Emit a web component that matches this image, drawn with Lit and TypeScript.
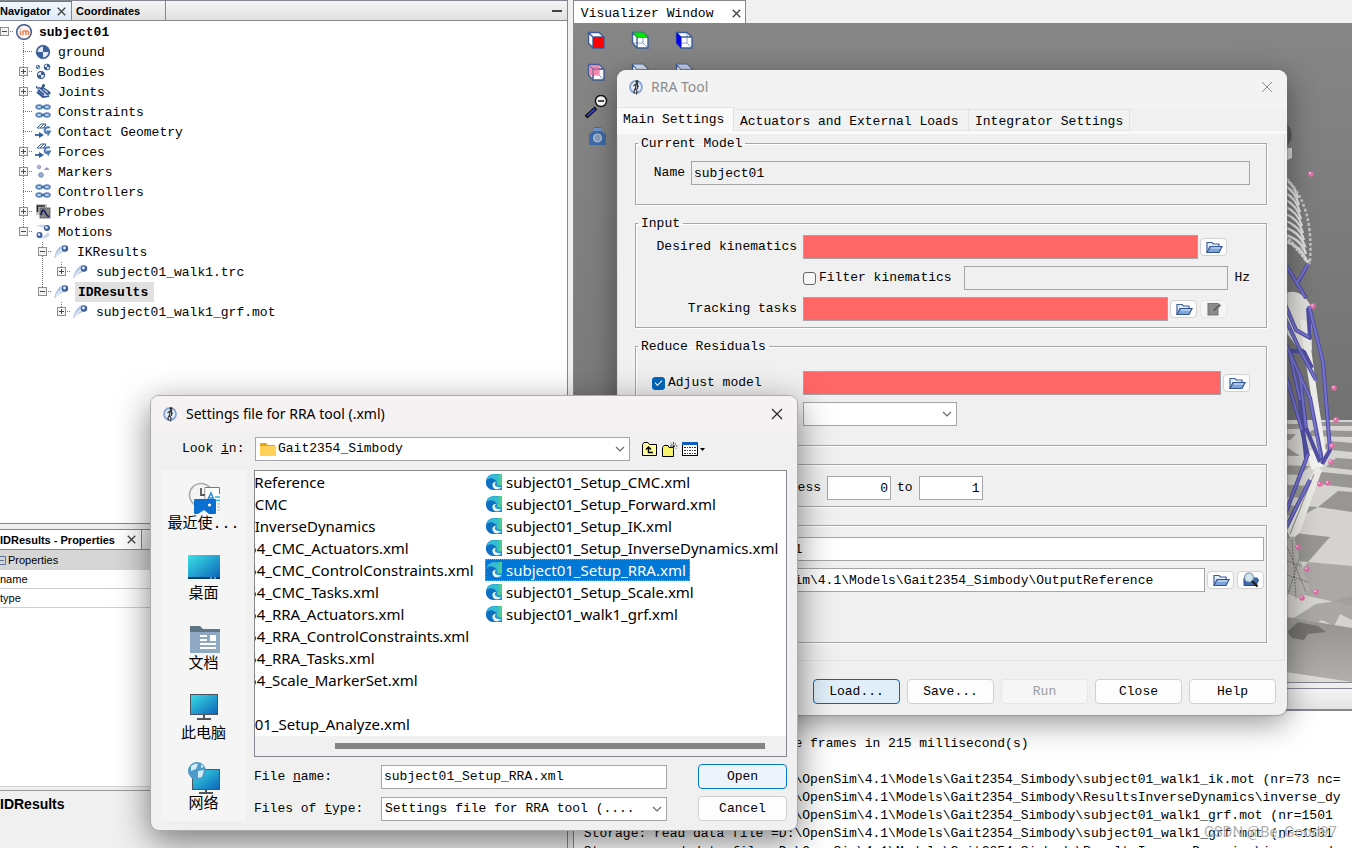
import { LitElement, html, svg, css, nothing, TemplateResult } from "lit";
import { customElement, property } from "lit/decorators.js";

const MONO = css`"Liberation Mono", "Noto Sans CJK SC", monospace`;
const UI = css`"Noto Sans", "Noto Sans CJK SC", sans-serif`;

/* ---------- icon drawings ---------- */

const ball = (cx: number, cy: number, r: number) => svg`
  <circle cx=${cx} cy=${cy} r=${r} fill="#3b5f9c" stroke="#27467e" stroke-width="0.6"></circle>
  <path d="M${cx} ${cy} V${cy - r * 0.8} A${r * 0.8} ${r * 0.8} 0 0 0 ${cx - r * 0.8} ${cy} Z
           M${cx} ${cy} V${cy + r * 0.8} A${r * 0.8} ${r * 0.8} 0 0 0 ${cx + r * 0.8} ${cy} Z" fill="#e4edf8"></path>`;

const link = (x: number, y: number) => svg`
  <ellipse cx=${x + 3.6} cy=${y} rx="3" ry="1.8" fill="#c4d6ec" stroke="#5684bd" stroke-width="1.7"></ellipse>
  <ellipse cx=${x + 11.4} cy=${y} rx="3" ry="1.8" fill="#c4d6ec" stroke="#5684bd" stroke-width="1.7"></ellipse>
  <path d="M${x + 5.5} ${y} h4" stroke="#34609c" stroke-width="1.4"></path>`;

const force = svg`
  <path d="M3 5 L7 1 M6 5 L10 1 M9 5 L12 2 M3 5 H10 L12 1 H7" stroke="#3c5f95" stroke-width="1" fill="none"></path>
  <path d="M1 12 H6" stroke="#2f5fa8" stroke-width="1.8"></path>
  <path d="M5 9 L10 12 L5 15 Z" fill="#2f5fa8"></path>
  <path d="M16 4.500 C10 3 9 10 13 10" fill="none" stroke="#4d79b5" stroke-width="2"></path>
  <path d="M12 7.500 H17.500 L14 13.500 Z" fill="#4d79b5"></path>`;

const motion = svg`
  <path d="M1 15 C3 7 6 3 11 2 L14 8 C9 9 6 11 2 15 Z" fill="#b7c8e4"></path>
  <path d="M3 14 C5 9 8 7 12 6" stroke="#e6eefa" stroke-width="1.5" fill="none"></path>
  <circle cx="12" cy="5.500" r="3.200" fill="#3b5f9c"></circle>
  <circle cx="11.500" cy="5" r="1.400" fill="#eef4fc"></circle>`;

const treeIcons: Record<string, TemplateResult> = {
  model: svg`
    <circle cx="9" cy="9" r="7.300" fill="#fff6f0" stroke="#3a5687" stroke-width="1.500"></circle>
    <path d="M4.500 4.500 A6 6 0 0 0 4.500 13.500" fill="none" stroke="#8ea8d4" stroke-width="1"></path>
    <path d="M5.500 8 V12 M5.500 5.500 V6.500 M8 12 V7.500 M8 9 Q9.500 6.500 10.800 9 V12 M10.800 9 Q12.500 6.500 13.500 9 V12" fill="none" stroke="#e88455" stroke-width="1.500"></path>`,
  ground: svg`${ball(9, 9, 6.8)}`,
  bodies: svg`${ball(4, 4, 1.8)}${ball(13, 4, 3)}${ball(7, 12, 3.8)}`,
  joints: svg`
    <path d="M2 4 L7 6 L10 2 M7 6 L14 12 M3 9 L9 14 L15 13 M9 5 L15 9 M4 7 L10 12" fill="none" stroke="#2f5590" stroke-width="2"></path>
    <path d="M3 4 L7 7 L14 13 M9 6 L14 9" fill="none" stroke="#c9d8ef" stroke-width="0.700"></path>
    <circle cx="9.500" cy="2.500" r="1.500" fill="#2f5590"></circle><circle cx="15" cy="10" r="1.600" fill="#2f5590"></circle>`,
  links: svg`${link(1.5, 4)}${link(1.5, 12)}`,
  force,
  markers: svg`
    <circle cx="5" cy="4" r="1.800" fill="#b4b0d4" stroke="#6d80b4" stroke-width="0.600"></circle>
    <path d="M10.500 6.500 Q13 3 15 6.500 Z" fill="#b09cc4" stroke="#6d80b4" stroke-width="0.600"></path>
    <circle cx="7" cy="12" r="2.300" fill="#9db4d8" stroke="#5b78b0" stroke-width="0.800"></circle>`,
  probes: svg`
    <rect x="2" y="1" width="11" height="11" fill="#c8c8c8"></rect>
    <path d="M3.500 9 V3 H11" stroke="#222" stroke-width="1.600" fill="none"></path>
    <rect x="6" y="5" width="10" height="10" fill="#858585" stroke="#555" stroke-width="0.800"></rect>
    <path d="M7 12 Q8.500 4 11 9 T15 13" stroke="#151560" stroke-width="1.600" fill="none"></path>`,
  motions: svg`
    <path d="M2 3 Q9 0 14 3 L11 6 Q6 3 2 3 Z" fill="#cbd8ec"></path>
    <path d="M4 15 Q12 17 16 12 L14 9 Q10 14 4 15 Z" fill="#cbd8ec"></path>
    <circle cx="13" cy="5" r="3" fill="#3b5f9c"></circle><circle cx="12.500" cy="4.500" r="1.300" fill="#eef4fc"></circle>
    <circle cx="5.500" cy="12" r="3" fill="#3b5f9c"></circle><circle cx="5" cy="11.500" r="1.300" fill="#eef4fc"></circle>`,
  motion,
};

const cube = (face: string, colour: string) => {
  const faces: Record<string, string> = {
    front: "M6 6 H17 V17 H6 Z",
    top: "M2 1.500 H12 L16.500 6 H6 Z",
    left: "M1.500 1.500 L6 6 V17 L1.500 12 Z",
    back: "M2 2 H12 V12 H2 Z",
  };
  return html`<svg class="cube" viewBox="0 0 18 18" width="18" height="18" aria-hidden="true">
    <path d="M1.500 1.500 H12 L17 6 V17 H6 L1.500 12 Z" fill="#ffffff"></path>
    ${face === "front" ? nothing : svg`<path d="M12 1.500 V12 H1.500 M12 12 L17 17" fill="none" stroke="#8fa3c8" stroke-width="1"></path>`}
    <path d="M1.500 1.500 H12 L17 6 V17 H6 L1.500 12 Z M1.500 1.500 L6 6 H17 M6 6 V17" fill="none" stroke="#3f5d94" stroke-width="1.400"></path>
    <path d=${faces[face]} fill=${colour}></path>
    ${face === "back" ? svg`<path d="M1.500 1.500 L6 6 H17 M6 6 V17" fill="none" stroke="#7d5d94" stroke-width="1"></path>` : nothing}
  </svg>`;
};

const folderIcon = html`<svg viewBox="0 0 18 14" width="18" height="14" aria-hidden="true">
  <path d="M2 12.500 V2.500 H7 L8.500 4 H14 V6" fill="#e3edf9" stroke="#3d6096" stroke-width="1.200"></path>
  <path d="M2 12.500 L5 6.500 H17 L14 12.500 Z" fill="#7fa4d9" stroke="#34568e" stroke-width="1.200"></path>
  <path d="M6 8 H15.500" stroke="#d3e2f6" stroke-width="1.200"></path></svg>`;

const editIcon = html`<svg viewBox="0 0 18 14" width="18" height="14" aria-hidden="true">
  <rect x="3" y="1.500" width="10" height="11.500" fill="#8b8b8b" stroke="#757575"></rect>
  <path d="M7 10 L8 7 L14 1.500 L16 3.500 L10 9.500 Z" fill="#666" stroke="#a8a8a8" stroke-width="0.600"></path></svg>`;

const searchFolderIcon = html`<svg viewBox="0 0 18 16" width="18" height="16" aria-hidden="true">
  <path d="M2 13.500 V6 H15 L16.500 8 L14 13.500 Z" fill="#3e6cae" stroke="#2b4d86"></path>
  <circle cx="7" cy="5.500" r="4.500" fill="#cfe6ee" stroke="#7d93a4" stroke-width="1.200"></circle>
  <path d="M10 9 L15.500 14.500" stroke="#1d1d1d" stroke-width="2.400"></path></svg>`;

const appIcon = html`<svg viewBox="0 0 16 16" width="16" height="16" aria-hidden="true">
  <circle cx="8" cy="8" r="6" fill="#e3ecf8" stroke="#88a5d4" stroke-width="1.800"></circle>
  <circle cx="9" cy="2.500" r="1.500" fill="#333"></circle>
  <path d="M8.500 4 L7.500 9 L9 12 L8.500 15.500 M7.500 9 L6 12 L6.500 14.500 M8 5 L5.500 7 M9 5 L10.500 8 M9.500 4 V10" fill="none" stroke="#3a3a3a" stroke-width="1.200"></path></svg>`;

const cross = (size: number, colour: string, w = 1.2) => html`<svg viewBox="0 0 12 12" width=${size} height=${size} aria-hidden="true">
  <path d="M1 1 L11 11 M11 1 L1 11" stroke=${colour} stroke-width=${w} fill="none"></path></svg>`;

const chevron = html`<svg class="chevron" viewBox="0 0 10 6" width="10" height="6" aria-hidden="true">
  <path d="M1 1 L5 5 L9 1" fill="none" stroke="#6a6a6a" stroke-width="1.200"></path></svg>`;

const edgeIcon = html`<svg viewBox="0 0 16 16" width="16" height="16" aria-hidden="true">
  <path d="M0 8 C0 2.500 4 0 8.500 0 H16 V16 H8 C3 16 0 12.500 0 8 Z" fill="#1f8fd6"></path>
  <path d="M1 5 C4 -1 11 -1 16 3 V11 C13 13 10 11 11 9 C11 5 5 3 1 5 Z" fill="#34bfd0"></path>
  <path d="M12 0 H16 V11 C14 11.500 12 11 11.500 9.500 C14 6 13 2 12 0 Z" fill="#4ecb8d"></path>
  <path d="M0 8 C1 4 8 3 10 8 C7 7 5 10 7 13 C8 15 9 16 9 16 C3 16 0 12.500 0 8 Z" fill="#0f6fc4"></path>
  <path d="M10 8 C7.500 10 9 14 15.500 13 C13 16 8 16 7 13 C5.500 10 7.500 7.500 10 8 Z" fill="#e9f6fb"></path></svg>`;

const screen = (x: number, y: number, w: number, h: number) => svg`
  <rect x=${x} y=${y} width=${w} height=${h} fill="url(#scr)" stroke="#4b5560" stroke-width="1"></rect>`;
const scrDefs = svg`<defs><linearGradient id="scr" x1="0" y1="0" x2="1" y2="1">
  <stop offset="0" stop-color="#3be0e6"></stop><stop offset="1" stop-color="#0b63b8"></stop></linearGradient></defs>`;

const placeIcons: Record<string, TemplateResult> = {
  recent: html`<svg viewBox="0 0 34 34" width="34" height="34" aria-hidden="true">
    <circle cx="14" cy="13" r="11.500" fill="#f4f4f4" stroke="#a9a9a9" stroke-width="1.600"></circle>
    <path d="M14 6 V13 H18" fill="none" stroke="#555" stroke-width="1.800"></path>
    <path d="M18 31 V5.500 H32.500 V12" fill="#fff" stroke="#777" stroke-width="1"></path><rect x="18.500" y="6" width="13.500" height="25" fill="#fff"></rect>
    <path d="M20.500 18 L24 11 L27 18 M22 16 H26" stroke="#2f8fd8" stroke-width="1.600" fill="none"></path>
    <path d="M28 15 H33 M28 18.500 H33" stroke="#35b2e6" stroke-width="1.400"></path><path d="M30 22 H33 M30 25 H33 M30 28 H33" stroke="#aaa" stroke-width="1"></path>
    <rect x="7" y="17" width="22" height="15" rx="1" fill="#0a6fd0"></rect>
    <path d="M11 32 L17 28 L22 32 Z" fill="#f0f6fc"></path><circle cx="22.500" cy="23" r="1.600" fill="#fff"></circle></svg>`,
  desktop: html`<svg viewBox="0 0 34 34" width="34" height="34" aria-hidden="true">${scrDefs}
    <rect x="1" y="3" width="32" height="24" rx="1" fill="url(#scr)"></rect>
    <path d="M1 26 H33" stroke="#0c3e6e" stroke-width="2"></path><path d="M23 26 H31" stroke="#cfe7f5" stroke-width="1.200" stroke-dasharray="2 2"></path></svg>`,
  documents: html`<svg viewBox="0 0 34 34" width="34" height="34" aria-hidden="true">
    <path d="M3 4 H13 L16 7 H33 V14 H3 Z" fill="#5e7684"></path>
    <rect x="3" y="10" width="30" height="21" fill="#8fa8c4"></rect>
    <path d="M13 14 H20 M13 18 H20 M13 22 H29 M13 26 H29" stroke="#fff" stroke-width="2"></path><rect x="23" y="13" width="6" height="6" fill="#fff"></rect></svg>`,
  computer: html`<svg viewBox="0 0 34 34" width="34" height="34" aria-hidden="true">${scrDefs}
    ${screen(3.5, 2.5, 27, 20)}<path d="M17 23 V27 M10 27 H24" stroke="#4b5560" stroke-width="2"></path></svg>`,
  network: html`<svg viewBox="0 0 34 34" width="34" height="34" aria-hidden="true">${scrDefs}
    ${screen(5.5, 7.5, 27, 20)}<path d="M19 28 V31 M12 31 H26" stroke="#4b5560" stroke-width="2"></path>
    <circle cx="10" cy="9" r="9" fill="#4c9bcb"></circle>
    <path d="M4 4 Q8 1 11 2 L9 7 L4 9 Z M11 9 L17 8 L15 15 L11 16 Z M14 2 L17 5 L14 6 Z" fill="#d5ecf5"></path></svg>`,
};

/* ---------- left hand navigator ---------- */

interface TreeRow { label: string; icon: string; level: number; toggle?: "+" | "-"; last?: boolean; through?: number[]; bold?: boolean; selected?: boolean; }

const TREE: TreeRow[] = [
  { label: "subject01", icon: "model", level: 0, toggle: "-", bold: true, last: true },
  { label: "ground", icon: "ground", level: 1 },
  { label: "Bodies", icon: "bodies", level: 1, toggle: "+" },
  { label: "Joints", icon: "joints", level: 1, toggle: "+" },
  { label: "Constraints", icon: "links", level: 1 },
  { label: "Contact Geometry", icon: "force", level: 1 },
  { label: "Forces", icon: "force", level: 1, toggle: "+" },
  { label: "Markers", icon: "markers", level: 1, toggle: "+" },
  { label: "Controllers", icon: "links", level: 1 },
  { label: "Probes", icon: "probes", level: 1, toggle: "+" },
  { label: "Motions", icon: "motions", level: 1, toggle: "-", last: true },
  { label: "IKResults", icon: "motion", level: 2, toggle: "-" },
  { label: "subject01_walk1.trc", icon: "motion", level: 3, toggle: "+", last: true, through: [2] },
  { label: "IDResults", icon: "motion", level: 2, toggle: "-", bold: true, selected: true, last: true },
  { label: "subject01_walk1_grf.mot", icon: "motion", level: 3, toggle: "+", last: true },
];

@customElement("model-tree")
export class ModelTree extends LitElement {
  static styles = css`
    :host { display: block; font: 13px/20px ${MONO}; color: #000; padding-top: 1px; }
    .rows { list-style: none; margin: 0; padding: 0; }
    .row { display: flex; align-items: center; height: 20px; white-space: pre; }
    .icon { margin-right: 4px; flex: none; }
    .gutter { flex: none; }
    .label { padding: 1px 2px 0; line-height: 19px; }
    .bold { font-weight: bold; }
    .selected { background: #e0e0e0; padding: 1px 6px 0 3px; }
  `;
  private gutter(r: TreeRow) {
    const x = 4 + 19 * r.level;
    const w = 15 + 19 * r.level;
    return html`<svg class="gutter" width=${w} height="20" viewBox="0 0 ${w} 20" aria-hidden="true">
      <g stroke="#777" stroke-width="1" stroke-dasharray="1 1" fill="none">
        ${r.level > 0 ? svg`<path d="M${x + 0.5} 0 V${r.last ? 10 : 20}"></path>` : nothing}
        ${(r.through ?? []).map((l) => svg`<path d="M${4.5 + 19 * l} 0 V20"></path>`)}
        <path d="M${x} 9.500 H${x + 10}"></path>
      </g>
      ${r.toggle ? svg`<rect x=${x - 3.5} y="5.500" width="8" height="8" fill="#f4f4f4" stroke="#8d8d8d"></rect>
        <path d="M${x - 2} 9.500 H${x + 3} ${r.toggle === "+" ? `M${x + 0.5} 7 V12` : ""}" stroke="#2b4a8c" fill="none"></path>` : nothing}
    </svg>`;
  }
  render() {
    return html`<ul class="rows" role="tree">${TREE.map((r) => html`
      <li class="row" role="treeitem">
        ${this.gutter(r)}
        <svg class="icon" width="18" height="18" viewBox="0 0 18 18" aria-hidden="true">${treeIcons[r.icon]}</svg>
        <span class="label ${r.bold ? "bold" : ""} ${r.selected ? "selected" : ""}">${r.label}</span>
      </li>`)}</ul>`;
  }
}

/* ---------- 3D view ---------- */

@customElement("model-scene")
export class ModelScene extends LitElement {
  static styles = css`:host { display: block; } .scene { display: block; height: 100%; }`;
  private marker(x: number, y: number) {
    return svg`<circle cx=${x} cy=${y} r="2.800" fill="#e06fa8"></circle><circle cx=${x - 0.8} cy=${y - 0.8} r="0.900" fill="#fbd3e6"></circle>`;
  }
  render() {
    const ribs = Array.from({ length: 10 }, (_, i) => i);
    return html`<svg class="scene" viewBox="1232 24 120 658" width="120" preserveAspectRatio="xMaxYMin slice" aria-hidden="true">
      <defs>
        <linearGradient id="sky" x1="0" y1="0" x2="0" y2="1"><stop offset="0" stop-color="#868686"></stop><stop offset="1" stop-color="#727272"></stop></linearGradient>
        <linearGradient id="near" x1="0" y1="0" x2="0" y2="1"><stop offset="0" stop-color="#8f8e8b"></stop><stop offset="1" stop-color="#b0afab"></stop></linearGradient>
      </defs>
      <rect x="1232" y="24" width="120" height="396" fill="url(#sky)"></rect>
      <rect x="1232" y="420" width="120" height="262" fill="#d4d3cf"></rect>
      <g fill="#979692">
        <path d="M1232 424 H1302 L1298 429 H1232 Z M1318 422 H1352 V426 H1316 Z"></path>
        <path d="M1232 434 H1296 L1290 440 H1232 Z M1312 430 L1352 431 V437 L1306 436 Z"></path>
        <path d="M1232 448 L1288 448 L1300 456 L1232 455 Z M1330 441 L1352 443 V452 L1320 449 Z"></path>
        <path d="M1232 464 L1310 466 L1300 475 L1232 472 Z M1336 458 L1352 459 V470 L1326 467 Z"></path>
        <path d="M1322 472 L1352 475 V488 L1310 483 Z"></path>
        <path d="M1232 482 L1312 486 L1302 498 L1232 492 Z"></path>
        <path d="M1232 502 L1318 507 L1300 517 L1232 510 Z M1338 491 L1352 492 V512 L1318 507 Z"></path>
        <path d="M1232 526 L1330 537 L1308 562 L1232 556 Z"></path>
        <path d="M1308 562 L1352 566 V606 L1300 594 L1286 588 Z" fill="#aaa9a5"></path>
      </g>
      <path d="M1232 608 L1352 628 V682 L1232 668 Z" fill="url(#near)"></path>
      <path d="M1232 664 L1286 672 L1352 682 H1232 Z" fill="#dedcd6"></path>
      <path d="M1287 622 L1300 614 L1316 604 L1330 602 L1352 596 V620 L1340 614 L1334 626 L1322 620 L1310 626 Z" fill="#9f9e9b" opacity="0.800"></path>
      <path d="M1287 632 L1298 622 L1318 626 L1326 632 L1308 634 L1304 640 L1292 638 Z" fill="#737270"></path>

      <path d="M1284 122 Q1294 128 1291 140 L1286 148 Z" fill="#5b5b5b"></path>
      <path d="M1286 148 L1292 148 V158 L1287 160 Z" fill="#d8d8d8"></path>
      <g fill="none" stroke="#e2e2e0" stroke-width="2.400">
        ${ribs.map((i) => svg`<path d="M1284 ${178 + i * 7} Q${1294 + i} ${184 + i * 7} ${1298 + Math.min(i, 8)} ${198 + i * 7}"></path>`)}
      </g>
      <path d="M1287 179 Q1314 206 1310 262" fill="none" stroke="#c4c4c2" stroke-width="2.500" stroke-dasharray="3 2"></path>
      <path d="M1286 236 L1298 250 L1310 264 M1298 250 L1306 246" fill="none" stroke="#dadad8" stroke-width="3.500" stroke-dasharray="3 1"></path>

      <path d="M1284 294 Q1300 286 1311 306 L1312 350 L1298 348 L1284 330 Z" fill="#e1e0dc"></path>
      <path d="M1300 320 Q1308 316 1310 340 L1318 400 L1326 452 L1320 456 L1312 402 L1304 350 Z" fill="#eeede9"></path>
      <path d="M1310 450 L1324 452 L1324 466 L1312 470 L1308 458 Z" fill="#f3f2ee"></path>
      <path d="M1316 466 L1322 470 L1300 532 L1292 540 L1286 530 Z" fill="#eceae5"></path>
      <path d="M1314 474 L1290 534" stroke="#8b8a88" stroke-width="1"></path>
      <g fill="none" stroke="#4f4ea2" stroke-width="4" stroke-linejoin="round">
        <path d="M1284 262 L1306 298 M1308 264 L1297 284"></path>
        <path d="M1309 306 L1323 362 L1330 450 L1322 464"></path>
        <path d="M1284 302 L1296 330 L1310 338 L1308 308 M1284 316 L1300 350 L1316 380"></path>
        <path d="M1284 350 L1304 352 L1312 368 M1284 340 L1310 398 L1322 460 M1290 354 L1300 400 L1306 458"></path>
        <path d="M1286 376 L1302 430 L1308 456 M1300 376 L1306 428 L1320 462"></path>
        <path d="M1308 454 L1286 512 M1310 480 L1286 528"></path>
      </g>
      <g fill="none" stroke="#7775cf" stroke-width="2">
        <path d="M1284 261 L1305 297 M1308 264 L1297 283 M1309 306 L1323 362 L1330 450 M1284 302 L1296 330 L1309 337 M1284 316 L1300 350 L1316 380 M1284 340 L1310 398 L1321 458 M1286 376 L1302 430 M1300 376 L1306 428 M1290 354 L1300 400 M1308 454 L1286 512 M1310 480 L1286 528"></path>
      </g>
      <path d="M1284 540 L1294 536 L1300 560 L1310 590 L1298 598 L1284 592 Z" fill="#b5b4b0"></path>
      <path d="M1286 544 L1306 592 M1292 540 L1296 598 M1284 560 L1302 566 M1284 574 L1308 582 M1300 556 L1288 594" stroke="#73726f" stroke-width="1" fill="none" stroke-dasharray="2 1"></path>
      ${[[1311, 174], [1313, 306], [1334, 388], [1336, 420], [1332, 446], [1331, 462], [1320, 484], [1328, 483], [1298, 547], [1307, 569], [1316, 592], [1302, 598]].map(([x, y]) => this.marker(x, y))}
    </svg>`;
  }
}

/* ---------- shared control styles ---------- */

const controls = css`
  :host { display: block; font: 13px/16px ${MONO}; color: #000; }
  input, select, button { font: inherit; color: inherit; box-sizing: border-box; margin: 0; min-width: 0; border-radius: 0; }
  .field { height: 24px; border: 1px solid #a5a5a9; background: #fff; padding: 0 2px; outline: none; }
  .grow { flex: 1; }
  .combo { display: grid; align-items: center; }
  .combo > * { grid-area: 1 / 1; }
  .combo > select { appearance: none; width: 100%; height: 24px; border: 1px solid #a5a5a9; background: #fff; padding: 0 24px 0 3px; outline: none; }
  .chevron { justify-self: end; margin-right: 5px; pointer-events: none; }
  .push { height: 25px; border: 1px solid #d0d0d0; border-radius: 4px; background: #fdfdfd; padding: 0; text-align: center; }
  .titlebar { display: flex; align-items: center; font: 14px/20px ${UI}; }
  .close { border: 0; background: none; padding: 0; display: flex; margin-left: auto; }
`;

/* ---------- RRA tool window ---------- */

@customElement("rra-dialog")
export class RraDialog extends LitElement {
  static styles = [controls, css`
    .window { width: 670px; box-sizing: border-box; background: #f0f0f0; border-radius: 9px; overflow: hidden; padding-bottom: 11px; box-shadow: 0 0 1px 1px rgba(110,110,110,.45), 0 8px 30px rgba(0,0,0,.42); }
    .titlebar { height: 38px; background: #f3f3f3; padding: 0 14px 4px 11px; box-sizing: border-box; gap: 7px; color: #8c8c8c; }
    .tabs { display: flex; align-items: flex-end; height: 26px; border-bottom: 3px solid #fafafa; box-sizing: border-box; }
    .tab { height: 22px; border: 1px solid #e3e3e3; border-left: 0; background: #f2f2f2; padding: 3px 4px 0 6px; white-space: nowrap; text-align: left; }
    .tab.integ { width: 161px; }
    .tab.act { width: 235px; }
    .tab.on { height: 24px; width: 117px; background: #fafafa; border-bottom: 0; padding-top: 1px; }
    .pane { border: 1px solid #e2e2e2; border-top: 0; margin-right: 2px; padding: 1px 17px 17px 17px; display: flex; flex-direction: column; gap: 10px; }
    fieldset { margin: 0; min-width: 0; border: 1px solid #a6a6a8; box-shadow: 1px 1px 0 #fff, inset 1px 1px 0 #fff; padding: 0 16px; display: flex; flex-direction: column; gap: 7px; }
    legend { padding: 0 3px; margin-left: -14px; height: 16px; line-height: 18px; }
    .model { padding-top: 10px; padding-bottom: 19px; }
    .input { padding-top: 4px; padding-bottom: 6px; }
    .reduce { padding-top: 17px; padding-bottom: 19px; }
    .time { padding-top: 11px; padding-bottom: 6px; margin-top: 8px; }
    .output { padding: 11px 2px 50px 16px; margin-top: 8px; }
    .row { display: flex; align-items: center; height: 24px; gap: 6px; }
    .tight { display: flex; align-items: center; flex: 1; gap: 1px; }
    .end { padding-right: 23px; }
    .label { width: 145px; text-align: right; white-space: nowrap; line-height: 20px; }
    .label.short { width: 33px; }
    .label.mid { width: 71px; }
    .label.range { width: 169px; }
    .label.left { text-align: left; }
    .check { display: flex; align-items: center; gap: 3px; }
    .check.filter { width: 155px; }
    .check input { appearance: none; width: 13px; height: 13px; border: 1px solid #666; border-radius: 3px; background: #f6f6f6; display: grid; place-items: center; flex: none; }
    .check input:checked { background: #0067c0; border-color: #0067c0; }
    .check input:checked::after { content: ""; width: 6px; height: 3px; border: solid #fff; border-width: 0 0 1px 1px; transform: rotate(-45deg); margin-bottom: 2px; }
    .off { background: #f0f0f0; }
    .bad { background: #ff6666; }
    .num { width: 64px; text-align: right; }
    .tool { width: 27px; height: 18px; border: 1px solid #d2d2d2; border-radius: 4px; background: #fdfdfd; padding: 0; display: grid; place-items: center; flex: none; }
    .tool.dim { background: #f5f5f5; border-color: #e6e6e6; }
    .tight { gap: 2px; }
    .pair { gap: 3px; display: flex; }
    .method { width: 154px; }
    .buttons { display: flex; justify-content: flex-end; gap: 7px; padding: 18px 11px 0 0; }
    .push { width: 87px; }
    .push.hot { background: #e0eef9; border-color: #0067c0; }
    .push[disabled] { color: #9a9a9a; background: #f6f6f6; border-color: #e6e6e6; }
  `];
  private open = (label: string) => html`<button class="tool" aria-label=${label}>${folderIcon}</button>`;
  render() {
    return html`<section class="window" role="dialog" aria-label="RRA Tool">
      <header class="titlebar">${appIcon}<span>RRA Tool</span><button class="close" aria-label="Close window">${cross(12, "#8a8a8a", 1)}</button></header>
      <nav class="tabs" role="tablist">
        <button class="tab on" role="tab">Main Settings</button>
        <button class="tab act" role="tab">Actuators and External Loads</button>
        <button class="tab integ" role="tab">Integrator Settings</button>
      </nav>
      <div class="pane">
        <fieldset class="model"><legend>Current Model</legend>
          <div class="row"><label class="label short" for="name">Name</label><input id="name" class="field grow off" value="subject01" readonly></div>
        </fieldset>
        <fieldset class="input"><legend>Input</legend>
          <div class="row end"><label class="label" for="kin">Desired kinematics</label>
            <div class="tight"><input id="kin" class="field grow bad">${this.open("Browse kinematics")}</div></div>
          <div class="row"><span class="label"></span>
            <label class="check filter"><input type="checkbox">Filter kinematics</label>
            <input class="field grow off" aria-label="Cutoff frequency" disabled><span>Hz</span></div>
          <div class="row end"><label class="label" for="tasks">Tracking tasks</label>
            <div class="tight"><input id="tasks" class="field grow bad">
              <span class="pair">${this.open("Browse tasks")}<button class="tool dim" aria-label="Edit tasks" disabled>${editIcon}</button></span></div></div>
        </fieldset>
        <fieldset class="reduce"><legend>Reduce Residuals</legend>
          <div class="row"><label class="check label left"><input type="checkbox" checked>Adjust model</label>
            <div class="tight"><input class="field grow bad" aria-label="Adjusted model file">${this.open("Browse model")}</div></div>
          <div class="row"><span class="label"></span><div class="combo method"><select aria-label="Body"><option></option></select>${chevron}</div></div>
        </fieldset>
        <fieldset class="time">
          <div class="row"><label class="label range" for="t0">Time range to process</label>
            <input id="t0" class="field num" value="0"><label for="t1">to</label><input id="t1" class="field num" value="1"></div>
        </fieldset>
        <fieldset class="output">
          <div class="row"><label class="label mid" for="prefix">Prefix</label><input id="prefix" class="field grow" value="subject01"></div>
          <div class="row"><label class="label mid" for="dir">Directory</label>
            <div class="tight"><input id="dir" class="field grow" value="D:\\OpenSim\\4.1\\Models\\Gait2354_Simbody\\OutputReference">
              <span class="pair">${this.open("Browse directory")}<button class="tool" aria-label="Show directory">${searchFolderIcon}</button></span></div></div>
        </fieldset>
      </div>
      <footer class="buttons">
        <button class="push hot">Load...</button><button class="push">Save...</button><button class="push" disabled>Run</button>
        <button class="push">Close</button><button class="push">Help</button>
      </footer>
    </section>`;
  }
}

/* ---------- file chooser window ---------- */

const FILES_LEFT = ["OutputReference", "ResultsCMC", "ResultsInverseDynamics", "gait2354_CMC_Actuators.xml",
  "gait2354_CMC_ControlConstraints.xml", "gait2354_CMC_Tasks.xml", "gait2354_RRA_Actuators.xml",
  "gait2354_RRA_ControlConstraints.xml", "gait2354_RRA_Tasks.xml", "gait2354_Scale_MarkerSet.xml", "", "subject01_Setup_Analyze.xml"];
const FILES_RIGHT = ["subject01_Setup_CMC.xml", "subject01_Setup_Forward.xml", "subject01_Setup_IK.xml",
  "subject01_Setup_InverseDynamics.xml", "subject01_Setup_RRA.xml", "subject01_Setup_Scale.xml", "subject01_walk1_grf.xml"];
const PLACES: [string, string][] = [["recent", "最近使..."], ["desktop", "桌面"], ["documents", "文档"], ["computer", "此电脑"], ["network", "网络"]];

@customElement("file-dialog")
export class FileDialog extends LitElement {
  @property() selected = "subject01_Setup_RRA.xml";
  static styles = [controls, css`
    .window { width: 648px; box-sizing: border-box; background: #f0f0f0; border: 1px solid #ababab; border-radius: 9px; overflow: hidden; box-shadow: 0 10px 34px rgba(0,0,0,.5); }
    .titlebar { height: 36px; background: #f6f1f2; padding: 0 14px 0 11px; gap: 8px; box-sizing: border-box; }
    .top { display: flex; align-items: center; padding: 5px 0 9px 31px; }
    .look { width: 73px; }
    .dir { width: 375px; }
    .dir > select { padding-left: 22px; }
    .folder { margin-left: 5px; pointer-events: none; }
    .acts { display: flex; gap: 3px; padding-left: 11px; }
    .act { border: 0; background: none; padding: 0; display: flex; }
    .body { display: flex; gap: 8px; padding: 0 10px 9px 10px; }
    .places { width: 85px; background: #f5f5f5; display: flex; flex-direction: column; padding-top: 12px; gap: 18px; box-sizing: border-box; }
    .place { height: 52px; border: 0; background: none; padding: 0; display: flex; flex-direction: column; align-items: center; font: 15px/17px "Liberation Mono", "Noto Sans CJK SC", sans-serif; white-space: nowrap; }
    .main { flex: 1; min-width: 0; }
    .list { height: 287px; box-sizing: border-box; border: 1px solid #828790; background: #fff; display: flex; flex-direction: column; overflow: hidden; font: 15px/22px ${UI}; }
    .cols { flex: 1; display: flex; margin-left: -51px; }
    .col { list-style: none; margin: 0; padding: 0; white-space: nowrap; }
    .col.first { width: 281px; flex: none; }
    .item { height: 22px; }
    .file { width: max-content; display: flex; align-items: center; gap: 4px; padding: 0 4px 0 1px; box-sizing: border-box; }
    .file.on { background: #0078d7; color: #fff; outline: 1px dotted #ff8a28; outline-offset: -1px; }
    .bar { height: 20px; background: #f0f0f0; padding: 7px 21px 0 80px; box-sizing: border-box; }
    .thumb { height: 6px; background: #858585; }
    .form { display: grid; grid-template-columns: 127px 1fr 89px; align-items: center; row-gap: 7px; padding-top: 7px; }
    .form .field, .form .combo { margin-right: 31px; }
    .push.def { background: #edf4fb; border-color: #0078d4; }
  `];
  render() {
    return html`<section class="window" role="dialog" aria-label="Settings file">
      <header class="titlebar">${appIcon}<span>Settings file for RRA tool (.xml)</span><button class="close" aria-label="Close window">${cross(12, "#222", 1.1)}</button></header>
      <div class="top">
        <label class="look" for="look">Look <u>i</u>n:</label>
        <div class="combo dir"><select id="look"><option>Gait2354_Simbody</option></select>
          <svg class="folder" width="16" height="14" viewBox="0 0 16 14" aria-hidden="true"><path d="M0 2 Q0 1 1 1 H6 L8 3 H15 V6 H0 Z" fill="#e9a21c"></path><rect y="4" width="16" height="10" rx="1" fill="#ffd257"></rect></svg>${chevron}</div>
        <div class="acts">
          <button class="act" aria-label="Up one level"><svg width="17" height="16" viewBox="0 0 17 16"><path d="M1.500 14.500 V3.500 L3 1.500 H7 L8.500 3.500 H15.500 V14.500 Z" fill="#ffffa0" stroke="#000"></path><path d="M7.500 6 V11.500 H12 M5 8.500 L7.500 6 L10 8.500" fill="none" stroke="#000" stroke-width="1.500"></path></svg></button>
          <button class="act" aria-label="New folder"><svg width="17" height="16" viewBox="0 0 17 16"><path d="M1.500 15.500 V6.500 L3 4.500 H7 L8 6.500 H12.500 V15.500 Z" fill="#f7f36a" stroke="#000"></path><path d="M12.500 1 V9 M9 5 H16.500 M10 2.500 L15 7.500 M15 2.500 L11 6.500" stroke="#222" stroke-width="0.900" stroke-dasharray="2 1"></path></svg></button>
          <button class="act" aria-label="View menu"><svg width="25" height="16" viewBox="0 0 25 16"><rect x="1.500" y="1.500" width="15" height="13" fill="#fff" stroke="#000"></rect><rect x="1" y="1" width="16" height="3" fill="#0a5fc0"></rect><path d="M3 6.500 H15 M3 9.500 H15 M3 12.500 H15" stroke="#333" stroke-dasharray="2 1 1 1"></path><path d="M19 7 H24 L21.500 10 Z" fill="#000"></path></svg></button>
        </div>
      </div>
      <div class="body">
        <nav class="places">${PLACES.map(([icon, label]) => html`<button class="place">${placeIcons[icon]}<span>${label}</span></button>`)}</nav>
        <div class="main">
          <div class="list">
            <div class="cols">
              <ul class="col first">${FILES_LEFT.map((f) => html`<li class="item">${f}</li>`)}</ul>
              <ul class="col">${FILES_RIGHT.map((f) => html`<li class="item file ${f === this.selected ? "on" : ""}">${edgeIcon}<span>${f}</span></li>`)}</ul>
            </div>
            <div class="bar"><div class="thumb"></div></div>
          </div>
          <div class="form">
            <label for="fname">File <u>n</u>ame:</label><input id="fname" class="field" .value=${this.selected}><button class="push def">Open</button>
            <label for="ftype">Files of <u>t</u>ype:</label>
            <div class="combo"><select id="ftype"><option>Settings file for RRA tool (....</option></select>${chevron}</div><button class="push">Cancel</button>
          </div>
        </div>
      </div>
    </section>`;
  }
}

/* ---------- application frame ---------- */

const STORE = "Storage: read data file =D:\\OpenSim\\4.1\\Models\\Gait2354_Simbody\\";
const LOG = [
  " ".repeat(27) + "e frames in 215 millisecond(s)", "",
  STORE + "subject01_walk1_ik.mot (nr=73 nc=", STORE + "ResultsInverseDynamics\\inverse_dy",
  STORE + "subject01_walk1_grf.mot (nr=1501 ", STORE + "subject01_walk1_grf.mot (nr=1501 ",
  STORE + "ResultsInverseDynamics\\inverse_dy",
];

@customElement("app-root")
export class AppRoot extends LitElement {
  static styles = css`
    :host { display: block; position: relative; height: 100vh; overflow: hidden; background: #f0f0f0; font: 11px/14px "Liberation Sans", sans-serif; color: #000; }
    .frame { display: flex; height: 100%; gap: 5px; }
    .side { flex: 0 0 42%; display: flex; flex-direction: column; gap: 5px; min-width: 0; }
    .work { flex: 1; display: flex; flex-direction: column; min-width: 0; gap: 5px; }
    .panel { border-right: 1px solid #828790; box-sizing: border-box; display: flex; flex-direction: column; background: #fff; border-bottom: 1px solid #828790; }
    .nav { flex: 1; }
    .props { height: 319px; border-top: 1px solid #828790; background: #f0f0f0; border-bottom: 0; }
    .tabs { display: flex; height: 21px; box-sizing: border-box; border-top: 1px solid #828790; border-bottom: 1px solid #828790; background: linear-gradient(#f4f4f4, #e2e2e2); font-weight: bold; }
    .props .tabs { border-top: 0; height: 20px; }
    .tab { border: 0; border-right: 1px solid #828790; background: none; font: inherit; color: inherit; padding: 0 5px 0 0; display: flex; align-items: center; justify-content: space-between; white-space: nowrap; box-sizing: border-box; }
    .tab.on { background: linear-gradient(#f2f8fd, #dcebf8); }
    .tab.coord { padding: 0 4px; width: 94px; }
    .navtab { width: 72px; border-top: 1px solid #3f7fb5; }
    .proptab { width: 142px; background: #fff; }
    .min { margin-left: auto; width: 20px; border: 0; background: none; padding: 0; display: grid; place-items: center; }
    .grid { background: #fff; flex: 1; border-bottom: 1px solid #d5d5d5; }
    .head { height: 20px; background: #d6d6d6; display: flex; align-items: center; gap: 2px; }
    .prop { height: 18px; line-height: 18px; border-bottom: 1px solid #cfcfcf; }
    .desc { border-top: 1px solid #9a9a9a; margin-top: 3px; height: 53px; padding-top: 4px; font-size: 14px; line-height: 18px; font-weight: bold; }
    .visual { flex: 1; display: flex; flex-direction: column; border-left: 1px solid #828790; border-bottom: 1px solid #828790; min-height: 0; }
    .vtabs { display: flex; height: 23px; flex: none; border-bottom: 1px solid #828790; background: #f0f0f0; }
    .vtab { border: 1px solid #828790; border-left: 0; border-bottom: 0; background: #fff; width: 172px; padding: 3px 4px 0 7px; font: 13px/18px ${MONO}; display: flex; align-items: center; justify-content: space-between; }
    .stage { flex: 1; min-height: 0; display: flex; justify-content: space-between; background: linear-gradient(#868686, #727272); }
    .tools { display: grid; grid-template-columns: 44px 44px 44px; grid-auto-rows: 32px; padding: 7px 0 0 13px; align-content: start; }
    .tool { border: 0; padding: 0; background: none; display: flex; align-items: flex-start; width: 24px; height: 28px; }
    .wide { margin-left: -3px; }
    .console { height: 160px; display: flex; flex-direction: column; border-left: 1px solid #828790; border-top: 1px solid #828790; box-sizing: border-box; background: #fff; overflow: hidden; }
    .bar { flex: none; height: 20px; background: linear-gradient(#f4f4f4, #e2e2e2); border-bottom: 2px solid #828790; }
    .log { margin: 0; padding: 24px 0 0 10px; font: 13px/18px ${MONO}; white-space: pre; }
    .rra, .files { position: absolute; }
    .rra { left: 617px; top: 70px; }
    .files { left: 150px; top: 395px; }
    .mark { position: absolute; right: 15px; bottom: 7px; font: 15px/18px Roboto, sans-serif; color: rgba(150,150,150,.75); text-shadow: 1px 1px 0 rgba(255,255,255,.7); }
  `;
  render() {
    return html`
      <main class="frame">
        <div class="side">
          <section class="panel nav">
            <div class="tabs"><button class="tab on navtab">Navigator ${cross(9, "#444", 1.8)}</button><button class="tab coord">Coordinates</button>
              <button class="min" aria-label="Minimize"><svg width="10" height="2"><rect width="10" height="2" fill="#444"></rect></svg></button></div>
            <model-tree></model-tree>
          </section>
          <section class="panel props">
            <div class="tabs"><button class="tab proptab">IDResults - Properties ${cross(9, "#444", 1.8)}</button></div>
            <div class="grid">
              <div class="head"><svg width="6" height="9"><path d="M0 .5 H5.500 V8.500 H0 M0 4.500 H4" fill="none" stroke="#5d6f99"></path></svg>Properties</div>
              <div class="prop">name</div><div class="prop">type</div>
            </div>
            <div class="desc">IDResults</div>
          </section>
        </div>
        <div class="work">
          <section class="visual">
            <div class="vtabs"><button class="vtab">Visualizer Window ${cross(9, "#444", 1.8)}</button></div>
            <div class="stage">
              <div class="tools">
                <button class="tool" aria-label="View +X">${cube("front", "#ff0000")}</button>
                <button class="tool" aria-label="View +Y">${cube("top", "#00e800")}</button>
                <button class="tool" aria-label="View +Z">${cube("left", "#0000f0")}</button>
                <button class="tool" aria-label="View -X">${cube("back", "#f58ab0")}</button>
                <button class="tool" aria-label="View -Y">${cube("top", "#d8e0ee")}</button>
                <button class="tool" aria-label="View -Z">${cube("top", "#c3cbe6")}</button>
                <button class="tool wide" aria-label="Zoom out"><svg width="24" height="24" viewBox="0 0 24 24"><path d="M2 22 L12 13" stroke="#111" stroke-width="4"></path><path d="M3 21 L11 14" stroke="#3a3fc0" stroke-width="1.800"></path><circle cx="17" cy="6" r="5.500" fill="#fff" stroke="#111" stroke-width="1.400"></circle><path d="M14 6 H20" stroke="#111" stroke-width="1.500"></path></svg></button>
                <span></span><span></span>
                <button class="tool" aria-label="Snapshot"><svg width="20" height="20" viewBox="0 0 20 20"><path d="M7 0 H14 V4 L19 7 V18 H2 V7 L7 4 Z" fill="#3f6ba8"></path><path d="M7 1 H14 V4 H7 Z" fill="#6f97cc"></path><circle cx="10.500" cy="11" r="4" fill="#8a9cb8" stroke="#c3d1e6"></circle></svg></button>
              </div>
              <model-scene></model-scene>
            </div>
          </section>
          <section class="console"><div class="bar"></div><pre class="log">${LOG.join("\n")}</pre></section>
        </div>
      </main>
      <rra-dialog class="rra"></rra-dialog>
      <file-dialog class="files"></file-dialog>
      <div class="mark">CSDN @Be_Good97</div>`;
  }
}
